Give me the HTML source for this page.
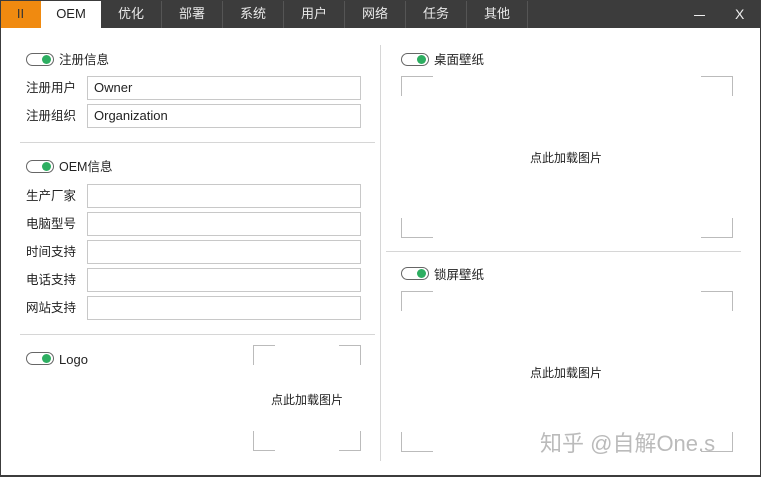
<!DOCTYPE html>
<html><head><meta charset="utf-8"><style>
*{margin:0;padding:0;box-sizing:border-box}
body{width:761px;height:477px;background:#fff;font-family:"Liberation Sans","Noto Sans CJK SC",sans-serif;font-size:12px;color:#222;position:relative;overflow:hidden}
.frame{position:absolute;left:0;top:0;width:761px;height:477px;border:1px solid #3c3c3c;border-bottom:2px solid #3c3c3c}
.bar{position:absolute;left:0;top:0;width:761px;height:28px;background:#3c3c3c}
.tab{position:absolute;top:0;height:28px;line-height:28px;text-align:center;color:#e8e8e8;font-size:13px;border-right:1px solid #555}
.a{position:absolute}
.tg{position:absolute;width:28px;height:13px;border:1px solid #666;border-radius:7px}
.tg:after{content:"";position:absolute;right:2px;top:1px;width:9px;height:9px;border-radius:50%;background:#2dae61}
.lbl{position:absolute;font-size:12.5px;line-height:16px}
.in{position:absolute;left:87px;width:274px;height:24px;border:1px solid #c8c8c8;padding-left:6px;line-height:22px;font-size:13px}
.sep{position:absolute;height:1px;background:#d6d6d6}
.c{position:absolute;border-color:#bbb;border-style:solid;width:22px;height:20px}
.txt{position:absolute;font-size:12px;line-height:16px}
</style></head><body>
<div class="bar"></div>
<div class="tab" style="left:0;width:41px;background:#f08a10;color:#333;border:none">II</div>
<div class="tab" style="left:41px;width:60px;background:#fff;color:#222;border:none">OEM</div>
<div class="tab" style="left:101px;width:61px">优化</div>
<div class="tab" style="left:162px;width:61px">部署</div>
<div class="tab" style="left:223px;width:61px">系统</div>
<div class="tab" style="left:284px;width:61px">用户</div>
<div class="tab" style="left:345px;width:61px">网络</div>
<div class="tab" style="left:406px;width:61px">任务</div>
<div class="tab" style="left:467px;width:61px">其他</div>
<div class="a" style="left:694px;top:15px;width:11px;height:1px;background:#eee"></div>
<div class="a" style="left:735px;top:6px;color:#eee;font-size:14px">X</div>
<div class="frame"></div>

<div class="tg" style="left:26px;top:53px"></div><div class="lbl" style="left:59px;top:52px">注册信息</div>
<div class="lbl" style="left:26px;top:80px">注册用户</div><div class="in" style="top:76px">Owner</div>
<div class="lbl" style="left:26px;top:108px">注册组织</div><div class="in" style="top:104px">Organization</div>
<div class="sep" style="left:20px;top:142px;width:355px"></div>
<div class="tg" style="left:26px;top:160px"></div><div class="lbl" style="left:59px;top:159px">OEM信息</div>
<div class="lbl" style="left:26px;top:188px">生产厂家</div><div class="in" style="top:184px"></div>
<div class="lbl" style="left:26px;top:216px">电脑型号</div><div class="in" style="top:212px"></div>
<div class="lbl" style="left:26px;top:244px">时间支持</div><div class="in" style="top:240px"></div>
<div class="lbl" style="left:26px;top:272px">电话支持</div><div class="in" style="top:268px"></div>
<div class="lbl" style="left:26px;top:300px">网站支持</div><div class="in" style="top:296px"></div>
<div class="sep" style="left:20px;top:334px;width:355px"></div>
<div class="tg" style="left:26px;top:352px"></div><div class="lbl" style="left:59px;top:352px;font-size:13px">Logo</div>
<div class="c" style="left:253px;top:345px;border-width:1px 0 0 1px"></div>
<div class="c" style="left:339px;top:345px;border-width:1px 1px 0 0"></div>
<div class="c" style="left:253px;top:431px;border-width:0 0 1px 1px"></div>
<div class="c" style="left:339px;top:431px;border-width:0 1px 1px 0"></div>
<div class="txt" style="left:271px;top:392px">点此加载图片</div>

<div class="sep" style="left:380px;top:45px;width:1px;height:416px"></div>

<div class="tg" style="left:401px;top:53px"></div><div class="lbl" style="left:434px;top:52px">桌面壁纸</div>
<div class="c" style="left:401px;top:76px;border-width:1px 0 0 1px;width:32px"></div>
<div class="c" style="left:701px;top:76px;border-width:1px 1px 0 0;width:32px"></div>
<div class="c" style="left:401px;top:218px;border-width:0 0 1px 1px;width:32px"></div>
<div class="c" style="left:701px;top:218px;border-width:0 1px 1px 0;width:32px"></div>
<div class="txt" style="left:530px;top:150px">点此加载图片</div>
<div class="sep" style="left:386px;top:251px;width:355px"></div>
<div class="tg" style="left:401px;top:267px"></div><div class="lbl" style="left:434px;top:267px">锁屏壁纸</div>
<div class="c" style="left:401px;top:291px;border-width:1px 0 0 1px;width:32px"></div>
<div class="c" style="left:701px;top:291px;border-width:1px 1px 0 0;width:32px"></div>
<div class="c" style="left:401px;top:432px;border-width:0 0 1px 1px;width:32px"></div>
<div class="c" style="left:701px;top:432px;border-width:0 1px 1px 0;width:32px"></div>
<div class="txt" style="left:530px;top:365px">点此加载图片</div>
<div class="a" style="left:540px;top:426px;font-size:22px;color:#bbb">知乎 @自解One.s</div>
</body></html>
